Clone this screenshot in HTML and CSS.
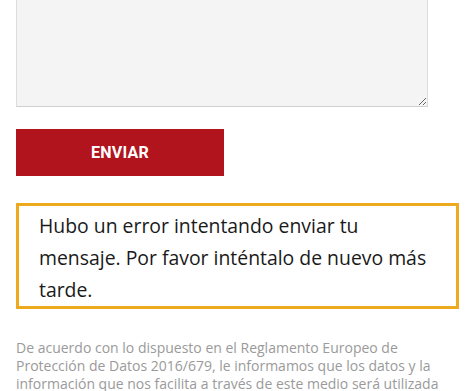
FILE: index.html
```html
<!DOCTYPE html>
<html lang="es">
<head>
<meta charset="utf-8">
<title>Contacto</title>
<link rel="stylesheet" href="styles.css">
</head>
<body>
<form class="form">
  <textarea class="message" aria-label="Mensaje"></textarea>
  <button type="button" class="send">ENVIAR</button>
  <div class="error">Hubo un error intentando enviar tu mensaje. Por favor inténtalo de nuevo más tarde.</div>
  <p class="legal">De acuerdo con lo dispuesto en el Reglamento Europeo de Protección de Datos 2016/679, le informamos que los datos y la información que nos facilita a través de este medio será utilizada</p>
</form>
</body>
</html>
```
FILE: styles.css
```css
html, body {
  margin: 0;
  padding: 0;
  background: #ffffff;
  overflow: hidden;
}
.form {
  display: flex;
  flex-direction: column;
  align-items: flex-start;
  padding: 0 15px 0 16px;
  font-family: "Open Sans", "Noto Sans", sans-serif;
}
.message {
  box-sizing: border-box;
  width: 412px;
  height: 121px;
  margin: -14px 0 0 0;
  background: #f4f4f4;
  border: 1px solid #dcdcdc;
  border-bottom-color: #d0d0d0;
  border-radius: 0;
  resize: vertical;
  padding: 8px;
}
.send {
  box-sizing: border-box;
  width: 208px;
  height: 47px;
  margin-top: 22px;
  background: #b1141c;
  color: #ffffff;
  border: 0;
  border-radius: 0;
  font-family: Roboto, "Liberation Sans", sans-serif;
  font-weight: 700;
  font-size: 16px;
  letter-spacing: 0.2px;
}
.error {
  box-sizing: border-box;
  align-self: stretch;
  margin-top: 27px;
  border: 3px solid #eeaa1e;
  padding: 4px 12px 0 20px;
  font-size: 19.4px;
  line-height: 32px;
  color: #1a1a1a;
  height: 106px;
}
.legal {
  margin: 30px 0 0 0;
  font-size: 14px;
  line-height: 18px;
  color: #9a9a9a;
}
```
